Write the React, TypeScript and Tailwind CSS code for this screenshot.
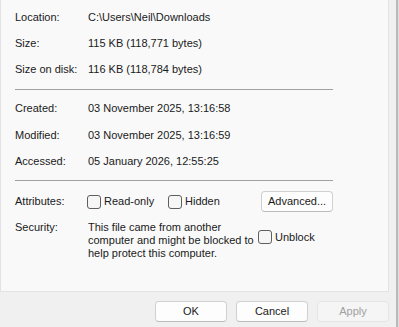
import React from 'react';

const font = { fontFamily: '"Liberation Sans", Arial, sans-serif' };

const Row = ({ label, value, className = '' }: { label: string; value: string; className?: string }) => (
  <div className={`flex h-[13px] leading-[13px] ${className}`}>
    <div className="w-[73px] shrink-0">{label}</div>
    <div className="whitespace-nowrap">{value}</div>
  </div>
);

const Check = ({ label, className = '' }: { label: string; className?: string }) => (
  <div className={`flex items-center ${className}`}>
    <span className="w-[14px] h-[14px] rounded-[3px] border border-[#5f5f5f] bg-[#f6f6f6] shrink-0" />
    <span className="ml-[3px] leading-[13px]">{label}</span>
  </div>
);

const Button = ({ label, disabled = false }: { label: string; disabled?: boolean }) => (
  <div
    className={`w-[72px] h-[21px] rounded-[4px] border flex items-center justify-center leading-[13px] ${
      disabled
        ? 'bg-[#f5f5f5] border-[#e5e5e5] text-[#a0a0a0]'
        : 'bg-[#fdfdfd] border-[#d0d0d0] border-b-[#bcbcbc] text-[#1a1a1a]'
    }`}
  >
    {label}
  </div>
);

export default function App() {
  return (
    <div className="w-[399px] h-[327px] bg-[#f0f0f0] flex overflow-hidden text-[11px] text-[#1a1a1a]" style={font}>
      <div className="w-[396px] flex flex-col">
        {/* Tab page */}
        <div className="w-[389px] h-[292px] bg-[#f9f9f9] border-l border-r border-b border-[#e3e3e3] pl-[14px] pt-[11px]">
          <div className="w-[318px]">
            <Row label="Location:" value="C:\Users\Neil\Downloads" />
            <Row label="Size:" value="115 KB (118,771 bytes)" className="mt-[13px]" />
            <Row label="Size on disk:" value="116 KB (118,784 bytes)" className="mt-[13px]" />

            <div className="mt-[13px] h-px bg-[#a0a0a0]" />

            <Row label="Created:" value="03 November 2025, 13:16:58" className="mt-[12px]" />
            <Row label="Modified:" value="03 November 2025, 13:16:59" className="mt-[14px]" />
            <Row label="Accessed:" value="05 January 2026, 12:55:25" className="mt-[13px]" />

            <div className="mt-[12px] h-px bg-[#a0a0a0]" />

            {/* Attributes */}
            <div className="mt-[10px] h-[21px] flex items-center">
              <div className="w-[72px] shrink-0 leading-[13px]">Attributes:</div>
              <Check label="Read-only" className="w-[81px]" />
              <Check label="Hidden" />
              <div className="ml-auto">
                <Button label="Advanced..." />
              </div>
            </div>

            {/* Security */}
            <div className="mt-[9px] flex">
              <div className="w-[73px] shrink-0 leading-[13px]">Security:</div>
              <div className="w-[170px] leading-[13px]">
                This file came from another computer and might be blocked to help protect this computer.
              </div>
              <Check label="Unblock" className="mt-[9px] self-start" />
            </div>
          </div>
        </div>

        {/* Dialog buttons */}
        <div className="mt-[9px] w-[389px] flex justify-end gap-[9px]">
          <Button label="OK" />
          <Button label="Cancel" />
          <Button label="Apply" disabled />
        </div>
      </div>
      <div className="w-[2px] bg-[#b9b9b9]" />
      <div className="w-[1px] bg-[#e0e0e0]" />
    </div>
  );
}
